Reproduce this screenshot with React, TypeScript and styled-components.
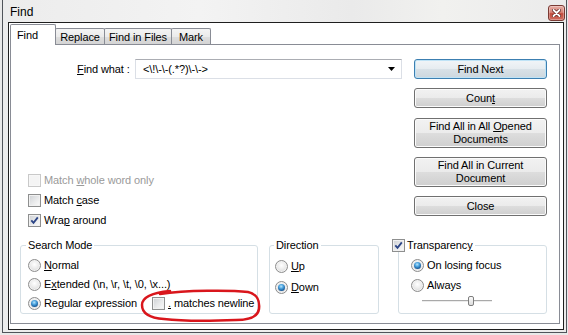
import React from "react";
import styled, { createGlobalStyle } from "styled-components";

const GlobalStyle = createGlobalStyle`
  html, body { margin: 0; padding: 0; }
  body {
    width: 568px; height: 335px; overflow: hidden; background: #e9e9e9;
    font-family: "Liberation Sans", Arial, sans-serif; font-size: 11px; color: #000;
    letter-spacing: -0.1px;
  }
  * { box-sizing: border-box; }
`;

const Window = styled.div`
  width: 568px;
  height: 335px;
  padding: 0 2px 2px 2px;
  background: #e9e9e9;
  display: flex;
`;

const Frame = styled.div`
  flex: 1;
  display: flex;
  flex-direction: column;
  border: 1px solid #50545a;
  border-top: none;
  background: linear-gradient(to right, #ececec 0%, #f3f3f3 35%, #eaeaea 62%, #f1f1ef 78%, #ebebeb 100%);
`;

const TitleBar = styled.div`
  height: 22px;
  flex-shrink: 0;
  display: flex;
  align-items: flex-start;
  padding-left: 7px;
`;

const Title = styled.div`
  font-size: 12px;
  line-height: 14px;
  margin-top: 5px;
  letter-spacing: 0;
`;

const CloseButton = styled.div`
  margin: 5px 1px 0 auto;
  width: 17px;
  height: 16px;
  border: 1px solid #7a3a33;
  border-radius: 3px;
  background: linear-gradient(#e8ada4 0%, #d8857a 45%, #c24c3e 55%, #d06e61 100%);
  box-shadow: inset 0 0 0 1px rgba(255, 255, 255, 0.3);
  display: flex;
  align-items: center;
  justify-content: center;
`;

const Client = styled.div`
  flex: 1;
  margin: 0 2px 2px 5px;
  border: 1px solid #1e1e1e;
  background: #fff;
  padding: 1px 3px 5px 1px;
  display: flex;
  flex-direction: column;
`;

const TabStrip = styled.div`
  height: 20px;
  flex-shrink: 0;
  display: flex;
  align-items: flex-end;
  position: relative;
  z-index: 1;
`;

const Tab = styled.div<{ $active?: boolean; $w: number }>`
  width: ${(p) => p.$w}px;
  height: ${(p) => (p.$active ? 21 : 16)}px;
  margin-left: ${(p) => (p.$active ? 0 : -1)}px;
  margin-bottom: ${(p) => (p.$active ? -1 : 0)}px;
  border: 1px solid #898c95;
  border-bottom: none;
  border-radius: 2px 2px 0 0;
  background: ${(p) =>
    p.$active ? "#fff" : "linear-gradient(#f4f4f4 0%, #ebebeb 50%, #dedede 51%, #d4d4d4 100%)"};
  display: flex;
  align-items: center;
  justify-content: center;
  padding-right: ${(p) => (p.$active ? 11 : 0)}px;
  white-space: nowrap;
`;

const Panel = styled.div`
  flex: 1;
  position: relative;
  border: 1px solid #898c95;
  background: #fff;
  padding: 14px 12px 0 9px;
  display: flex;
  flex-direction: column;
`;

const TopArea = styled.div`
  display: flex;
  justify-content: space-between;
  align-items: flex-start;
`;

const LeftCol = styled.div`
  display: flex;
  flex-direction: column;
`;

const FindRow = styled.div`
  height: 20px;
  display: flex;
  align-items: center;
  padding-left: 57px;
`;

const FindLabel = styled.span`
  width: 58px;
  white-space: nowrap;
`;

const Combo = styled.div`
  width: 267px;
  height: 20px;
  border: 1px solid #dbdfe6;
  border-top-color: #abadb3;
  display: flex;
  align-items: center;
  justify-content: space-between;
  padding: 0 6px 0 7px;
`;

const Key = styled.span`
  text-decoration: underline;
  text-underline-offset: 1px;
`;

const CheckList = styled.div`
  margin-top: 91px;
  padding-left: 8px;
  display: flex;
  flex-direction: column;
`;

const OptionRow = styled.div<{ $disabled?: boolean; $h?: number }>`
  height: ${(p) => p.$h ?? 20}px;
  display: flex;
  align-items: center;
  gap: 3px;
  white-space: nowrap;
  color: ${(p) => (p.$disabled ? "#9a9a9a" : "#000")};
`;

const Box = styled.span<{ $disabled?: boolean }>`
  width: 13px;
  height: 13px;
  flex-shrink: 0;
  border: 1px solid ${(p) => (p.$disabled ? "#c9c9c9" : "#8e8f8f")};
  background: ${(p) =>
    p.$disabled ? "#f4f4f4" : "linear-gradient(135deg, #cdd0d4 0%, #e9eaeb 55%, #fbfbfb 100%)"};
  box-shadow: inset 0 0 0 1px ${(p) => (p.$disabled ? "#f7f7f7" : "#f1f1f1")};
  display: flex;
  align-items: center;
  justify-content: center;
`;

const Circle = styled.span`
  width: 13px;
  height: 13px;
  flex-shrink: 0;
  border-radius: 50%;
  border: 1px solid #8d8d8d;
  background: radial-gradient(circle at 50% 40%, #ffffff 0%, #ececec 45%, #cdcdcd 100%);
  box-shadow: inset 0 0 0 1px #f2f2f2;
  display: flex;
  align-items: center;
  justify-content: center;
`;

const Dot = styled.span`
  width: 7px;
  height: 7px;
  border-radius: 50%;
  background: radial-gradient(circle at 45% 35%, #b9e5fb 0%, #4ca4df 35%, #1a5d9c 70%, #0d3a6b 100%);
`;

const ButtonCol = styled.div`
  width: 133px;
  flex-shrink: 0;
  display: flex;
  flex-direction: column;
`;

const Btn = styled.div<{ $h?: number; $mt?: number; $default?: boolean }>`
  height: ${(p) => p.$h ?? 20}px;
  margin-top: ${(p) => p.$mt ?? 0}px;
  border: 1px solid ${(p) => (p.$default ? "#3c7fb1" : "#707070")};
  border-radius: 3px;
  background: ${(p) =>
    p.$default
      ? "linear-gradient(#f1f5f8 0%, #e6ecf0 50%, #d8e1e7 51%, #cdd7de 100%)"
      : "linear-gradient(#f2f2f2 0%, #ebebeb 50%, #dddddd 51%, #cfcfcf 100%)"};
  box-shadow: inset 0 0 0 1px ${(p) => (p.$default ? "#bfe3f6" : "#fbfbfb")};
  display: flex;
  align-items: center;
  justify-content: center;
  text-align: center;
  line-height: 13px;
  white-space: nowrap;
`;

const GroupRow = styled.div`
  display: flex;
  align-items: stretch;
  margin-top: 9px;
`;

const Group = styled.fieldset<{ $w: number; $ml?: number; $pl: number; $pt?: number }>`
  width: ${(p) => p.$w}px;
  flex-shrink: 0;
  margin: 0 0 0 ${(p) => p.$ml ?? 0}px;
  min-width: 0;
  padding: ${(p) => p.$pt ?? 5}px 0 2px ${(p) => p.$pl}px;
  border: 1px solid #d5dfe5;
  border-radius: 3px;
`;

const Legend = styled.legend<{ $ml: number }>`
  padding: 0 2px;
  margin-left: ${(p) => p.$ml}px;
  height: 13px;
  line-height: 13px;
  display: flex;
  align-items: center;
  gap: 2px;
  white-space: nowrap;
`;

const GroupBody = styled.div<{ $gap: number }>`
  display: flex;
  flex-direction: column;
  gap: ${(p) => p.$gap}px;
`;

const SubCheck = styled.span`
  display: flex;
  align-items: center;
  gap: 3px;
  margin-left: 12px;
`;

const Slider = styled.div`
  position: relative;
  width: 70px;
  height: 12px;
  margin: 2px 0 0 11px;
  display: flex;
  align-items: center;
`;

const Track = styled.div`
  flex: 1;
  height: 2px;
  border-top: 1px solid #a9a9a9;
  background: #ececec;
`;

const Thumb = styled.div`
  position: absolute;
  top: 1px;
  width: 6px;
  height: 10px;
  border: 1px solid #7d7d7d;
  border-radius: 2px;
  background: linear-gradient(#fbfbfb, #dcdcdc);
`;

const Annotation = styled.svg`
  position: absolute;
  left: 125px;
  top: 240px;
  overflow: visible;
  pointer-events: none;
`;

const CheckMark = () => (
  <svg width="9" height="9" viewBox="0 0 9 9">
    <path d="M1.3 4.4 L3.5 6.9 L7.8 1.4" fill="none" stroke="#2c4586" strokeWidth="1.8" />
  </svg>
);

const Check: React.FC<{ checked?: boolean; disabled?: boolean }> = ({ checked, disabled }) => (
  <Box $disabled={disabled}>{checked && <CheckMark />}</Box>
);

const Radio: React.FC<{ on?: boolean }> = ({ on }) => <Circle>{on && <Dot />}</Circle>;

const SLIDER_VALUE = 0.72;

export default function App() {
  const comboText = "<\\!\\-\\-(.*?)\\-\\->";
  const extended = "tended (\\n, \\r, \\t, \\0, \\x...)";
  return (
    <>
      <GlobalStyle />
      <Window>
        <Frame>
          <TitleBar>
            <Title>Find</Title>
            <CloseButton>
              <svg width="9" height="8" viewBox="0 0 9 8">
                <path d="M1.5 1 L7.5 7 M7.5 1 L1.5 7" stroke="#5e2520" strokeWidth="3.4" strokeLinecap="round" />
                <path d="M1.5 1 L7.5 7 M7.5 1 L1.5 7" stroke="#ffffff" strokeWidth="1.8" strokeLinecap="round" />
              </svg>
            </CloseButton>
          </TitleBar>
          <Client>
            <TabStrip>
              <Tab $active $w={46}>Find</Tab>
              <Tab $w={50}>Replace</Tab>
              <Tab $w={68}>Find in Files</Tab>
              <Tab $w={40}>Mark</Tab>
            </TabStrip>
            <Panel>
              <TopArea>
                <LeftCol>
                  <FindRow>
                    <FindLabel>
                      <Key>F</Key>ind what :
                    </FindLabel>
                    <Combo>
                      <span>{comboText}</span>
                      <svg width="7" height="4" viewBox="0 0 7 4">
                        <path d="M0 0 H7 L3.5 4 Z" fill="#000" />
                      </svg>
                    </Combo>
                  </FindRow>
                  <CheckList>
                    <OptionRow $disabled>
                      <Check disabled />
                      <span>
                        Match <Key>w</Key>hole word only
                      </span>
                    </OptionRow>
                    <OptionRow>
                      <Check />
                      <span>
                        Match <Key>c</Key>ase
                      </span>
                    </OptionRow>
                    <OptionRow>
                      <Check checked />
                      <span>
                        Wra<Key>p</Key> around
                      </span>
                    </OptionRow>
                  </CheckList>
                </LeftCol>
                <ButtonCol>
                  <Btn $default>Find Next</Btn>
                  <Btn $mt={9}>
                    <span>
                      Coun<Key>t</Key>
                    </span>
                  </Btn>
                  <Btn $h={30} $mt={10}>
                    <span>
                      Find All in All <Key>O</Key>pened
                      <br />
                      Documents
                    </span>
                  </Btn>
                  <Btn $h={30} $mt={9}>
                    <span>
                      Find All in Current
                      <br />
                      Document
                    </span>
                  </Btn>
                  <Btn $mt={9}>Close</Btn>
                </ButtonCol>
              </TopArea>
              <GroupRow>
                <Group $w={238} $pl={7}>
                  <Legend $ml={-2}>Search Mode</Legend>
                  <GroupBody $gap={3}>
                    <OptionRow $h={16}>
                      <Radio />
                      <span>
                        <Key>N</Key>ormal
                      </span>
                    </OptionRow>
                    <OptionRow $h={16}>
                      <Radio />
                      <span>
                        E<Key>x</Key>
                        {extended}
                      </span>
                    </OptionRow>
                    <OptionRow $h={16}>
                      <Radio on />
                      <span>
                        Re<Key>g</Key>ular expression
                      </span>
                      <SubCheck>
                        <Check />
                        <span>
                          <Key>.</Key> matches newline
                        </span>
                      </SubCheck>
                    </OptionRow>
                  </GroupBody>
                </Group>
                <Group $w={110} $ml={11} $pl={5} $pt={6}>
                  <Legend $ml={-1}>Direction</Legend>
                  <GroupBody $gap={5}>
                    <OptionRow $h={16}>
                      <Radio />
                      <span>
                        <Key>U</Key>p
                      </span>
                    </OptionRow>
                    <OptionRow $h={16}>
                      <Radio on />
                      <span>
                        <Key>D</Key>own
                      </span>
                    </OptionRow>
                  </GroupBody>
                </Group>
                <Group $w={149} $ml={19} $pl={12}>
                  <Legend $ml={-21}>
                    <Check checked />
                    <span>
                      Transparenc<Key>y</Key>
                    </span>
                  </Legend>
                  <GroupBody $gap={4}>
                    <OptionRow $h={16}>
                      <Radio on />
                      <span>On losing focus</span>
                    </OptionRow>
                    <OptionRow $h={16}>
                      <Radio />
                      <span>Always</span>
                    </OptionRow>
                  </GroupBody>
                  <Slider>
                    <Track />
                    <Thumb style={{ left: `${Math.round(SLIDER_VALUE * (70 - 6))}px` }} />
                  </Slider>
                </Group>
              </GroupRow>
              <Annotation width="130" height="40" viewBox="0 0 130 40">
                <path
                  d="M24 9 C50 5, 95 5, 112 7 C121 9, 124 16, 123 24 C122 31, 114 35, 100 35 C75 36, 45 36, 28 34 C14 33, 6 28, 6 20 C6 13, 13 8, 34 6"
                  fill="none"
                  stroke="#d9161c"
                  strokeWidth="2.5"
                  strokeLinecap="round"
                />
              </Annotation>
            </Panel>
          </Client>
        </Frame>
      </Window>
    </>
  );
}
